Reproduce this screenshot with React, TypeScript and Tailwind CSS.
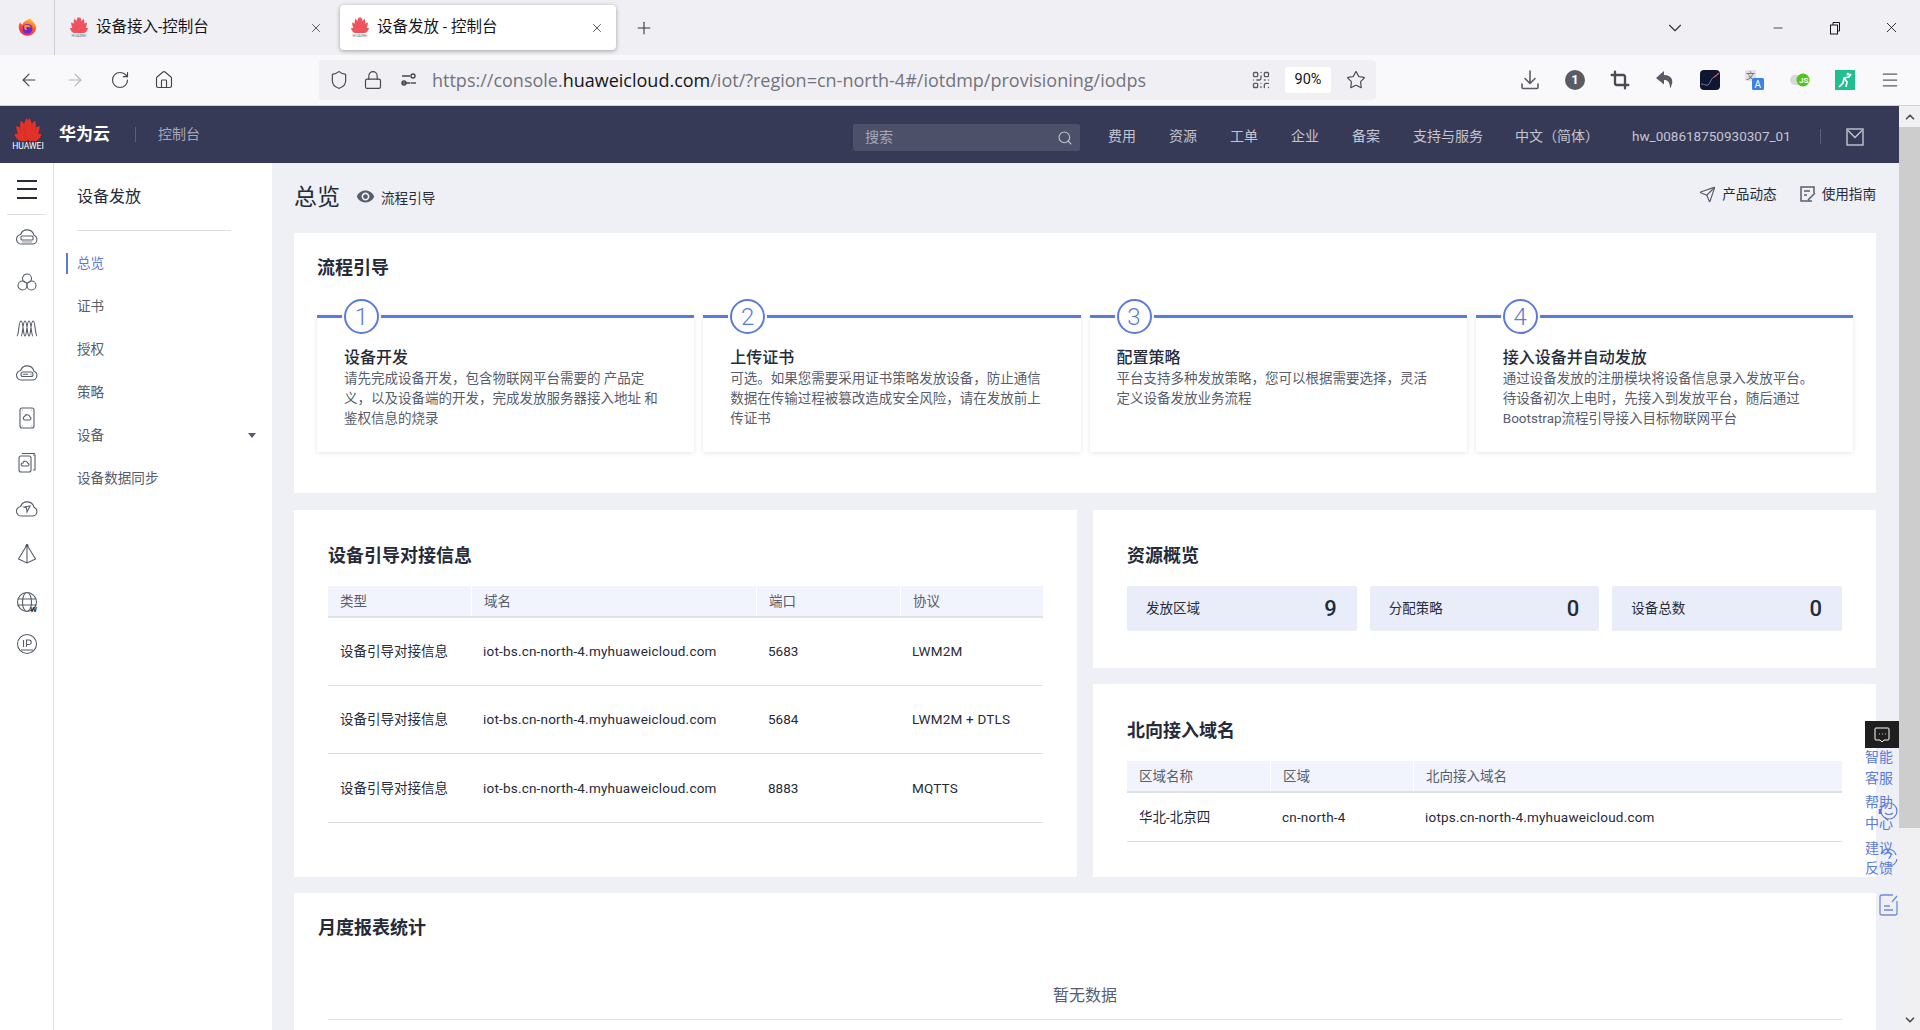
import { ArrowLeft, ArrowRight, ChevronDown, ChevronUp, Crop, Home, Lock, Menu, Minus, Plus, QrCode, RotateCw, Search, Send, Shield, Star, X } from 'lucide-react'
import { MdVisibility } from 'react-icons/md'
import type { ReactNode } from 'react'

const NAV_ITEMS = ['费用', '资源', '工单', '企业', '备案', '支持与服务', '中文（简体）']
const SIDE_ITEMS = ['总览', '证书', '授权', '策略', '设备', '设备数据同步']

const STEPS = [
  { n: '1', title: '设备开发', lines: ['请先完成设备开发，包含物联网平台需要的 产品定', '义，以及设备端的开发，完成发放服务器接入地址 和', '鉴权信息的烧录'] },
  { n: '2', title: '上传证书', lines: ['可选。如果您需要采用证书策略发放设备，防止通信', '数据在传输过程被篡改造成安全风险，请在发放前上', '传证书'] },
  { n: '3', title: '配置策略', lines: ['平台支持多种发放策略，您可以根据需要选择，灵活', '定义设备发放业务流程'] },
  { n: '4', title: '接入设备并自动发放', lines: ['通过设备发放的注册模块将设备信息录入发放平台。', '待设备初次上电时，先接入到发放平台，随后通过', 'Bootstrap流程引导接入目标物联网平台'] },
]

const ENDPOINTS = [
  { port: '5683', protocol: 'LWM2M' },
  { port: '5684', protocol: 'LWM2M + DTLS' },
  { port: '8883', protocol: 'MQTTS' },
]

const STATS = [
  { label: '发放区域', value: 9 },
  { label: '分配策略', value: 0 },
  { label: '设备总数', value: 0 },
]

// fan of 8 petals, both logos use it
function HuaweiPetals({ className, fill }: { className?: string; fill: string }) {
  const petals = [
    { a: -78, l: 0.84 }, { a: 78, l: 0.84 }, { a: -54, l: 0.94 }, { a: 54, l: 0.94 },
    { a: -32, l: 0.98 }, { a: 32, l: 0.98 }, { a: -11, l: 1 }, { a: 11, l: 1 },
  ]
  return (
    <svg viewBox="-15 -17 30 17.500" preserveAspectRatio="none" className={className}>
      {petals.map((p) => (
        <path
          key={p.a}
          d="M0 0C-4.600-4.500-5.200-11-2-17C3.400-13 4.200-5 0 0Z"
          fill={fill}
          stroke="#00000022"
          strokeWidth="0.25"
          transform={`rotate(${p.a}) scale(${p.a < 0 ? -p.l : p.l} ${p.l})`}
        />
      ))}
    </svg>
  )
}

function Favicon() {
  return (
    <span className="flex w-[20px] shrink-0 flex-col items-center">
      <HuaweiPetals className="h-[16px] w-[20px]" fill="#f0555f" />
      <span className="text-[4px] leading-[5px] text-gray-500">HUAWEI</span>
    </span>
  )
}

function FirefoxLogo() {
  return (
    <svg viewBox="0 0 24 24" className="h-[21px] w-[21px]">
      <defs>
        <linearGradient id="fx" x1="0.7" y1="0" x2="0.3" y2="1">
          <stop offset="0" stopColor="#ffd13a" />
          <stop offset="0.5" stopColor="#ff5a2c" />
          <stop offset="1" stopColor="#e5207a" />
        </linearGradient>
      </defs>
      <path d="M15 1c1 3 6 5 7 11a10 10 0 1 1-20-1c0-2 1-4 2-5 0 2 1 2 2 3 1-4 5-5 9-8Z" fill="url(#fx)" />
      <circle cx="12" cy="13.500" r="5.600" fill="#6b2bc9" />
      <path d="M8 10c3-2 7-1 8 2-2-1-5-1-6 1 2 0 2 2 0 2-1 0-2-2-2-5Z" fill="#ff8a3c" />
    </svg>
  )
}

function TabItem({ title, active }: { title: string; active?: boolean }) {
  return (
    <div className={`flex h-[45px] w-[276px] items-center rounded-[4px] pl-[10px] pr-[12px] ${active ? 'bg-white shadow-[0_1px_4px_rgba(0,0,0,0.35)]' : ''}`}>
      <Favicon />
      <span className="ml-[7px] flex-1 whitespace-nowrap text-[15.5px] text-[#15141a]">{title}</span>
      <X className="h-[14px] w-[14px] text-[#33333a]" strokeWidth={1.4} />
    </div>
  )
}

function BrowserChrome() {
  return (
    <div className="shrink-0">
      <div className="flex h-[55px] items-center bg-[#f0f0f4]">
        <div className="flex h-full w-[55px] shrink-0 items-center justify-center border-r border-[#cfcfd8]">
          <FirefoxLogo />
        </div>
        <div className="ml-[4px] w-[281px]"><TabItem title="设备接入-控制台" /></div>
        <TabItem title="设备发放 - 控制台" active />
        <Plus className="ml-[18px] h-[20px] w-[20px] text-[#33333a]" strokeWidth={1.3} />
        <div className="flex-1" />
        <ChevronDown className="mr-[85px] h-[22px] w-[22px] text-[#33333a]" strokeWidth={1.2} />
        <Minus className="mr-[43px] h-[14px] w-[14px] text-[#15141a]" strokeWidth={1.3} />
        <svg viewBox="0 0 14 14" className="mr-[41px] h-[14px] w-[14px]" fill="none" stroke="#15141a">
          <rect x="2.500" y="4" width="7" height="9" />
          <path d="M5 4V1.500h6.500V10H9.500" />
        </svg>
        <X className="mr-[20px] h-[17px] w-[17px] text-[#15141a]" strokeWidth={1.2} />
      </div>
      <div className="flex h-[51px] items-center border-b border-[#cfcfd8] bg-[#f9f9fb]">
        <ArrowLeft className="ml-[19px] h-[20px] w-[20px] text-[#45454d]" strokeWidth={1.4} />
        <ArrowRight className="ml-[26px] h-[20px] w-[20px] text-[#b4b4ba]" strokeWidth={1.4} />
        <RotateCw className="ml-[25px] h-[20px] w-[20px] text-[#45454d]" strokeWidth={1.4} />
        <Home className="ml-[24px] h-[20px] w-[20px] text-[#45454d]" strokeWidth={1.4} />
        <div className="ml-[145px] flex h-[40px] w-[1057px] items-center rounded-[4px] bg-[#f0f0f4]">
          <Shield className="ml-[10px] h-[20px] w-[20px] text-[#45454d]" strokeWidth={1.4} />
          <Lock className="ml-[14px] h-[20px] w-[20px] text-[#45454d]" strokeWidth={1.4} />
          <svg viewBox="0 0 20 20" className="ml-[16px] h-[20px] w-[20px]" fill="none" stroke="#45454d" strokeWidth="1.4">
            <circle cx="14" cy="6" r="2" />
            <path d="M3 6h8M3 13h8.500" />
            <circle cx="5" cy="13" r="2" />
            <path d="M12 13h5" />
          </svg>
          <span className="ml-[13px] w-[720px] whitespace-nowrap text-[18px] text-[#73737c] [font-family:'Open_Sans',sans-serif]">
            https://console.<span className="text-[#15141a]">huaweicloud.com</span>/iot/?region=cn-north-4#/iotdmp/provisioning/iodps
          </span>
          <QrCode className="ml-[99px] h-[20px] w-[20px] text-[#5b5b66]" strokeWidth={1.6} />
          <span className="ml-[14px] flex h-[26px] w-[46px] items-center justify-center rounded-[3px] bg-white text-[14.5px] text-[#15141a]">90%</span>
          <Star className="ml-[15px] h-[20px] w-[20px] text-[#45454d]" strokeWidth={1.4} />
        </div>
        <div className="flex-1" />
        <svg viewBox="0 0 20 20" className="mr-[25px] h-[20px] w-[20px]" fill="none" stroke="#5b5b66" strokeWidth="1.6" strokeLinecap="round" strokeLinejoin="round">
          <path d="M10 1v12M5 8.500l5 5 5-5M2 14v3.500a1 1 0 0 0 1 1h14a1 1 0 0 0 1-1V14" />
        </svg>
        <span className="mr-[25px] flex h-[20px] w-[20px] items-center justify-center rounded-full bg-[#5b5b66] text-[13px] font-bold text-white">1</span>
        <Crop className="mr-[25px] h-[20px] w-[20px] text-[#4a4a55]" strokeWidth={2.8} />
        <svg viewBox="0 0 20 20" className="mr-[25px] h-[20px] w-[20px]" fill="#5b5b66">
          <path d="M9 1 1 8l8 6.500V10c4 0 6 2.500 6 8.500 4.500-7 2.500-13.500-6-13.500V1Z" />
        </svg>
        <svg viewBox="0 0 20 20" className="mr-[25px] h-[20px] w-[20px]">
          <rect width="20" height="20" rx="4" fill="#0f1630" />
          <path d="M1 14c4 0 5 2 7 1s3-7 6-8 3-2 5-4" fill="none" stroke="#6d7fa8" strokeWidth="1" />
          <path d="M14 7c2-1 3-2 5-4" fill="none" stroke="#e5475a" strokeWidth="1.200" />
        </svg>
        <svg viewBox="0 0 20 20" className="mr-[25px] h-[20px] w-[20px]">
          <rect x="0" y="0" width="11" height="11" rx="1" fill="#e2e2e6" />
          <text x="1" y="9" fontSize="9" fill="#666">文</text>
          <rect x="7" y="8" width="12" height="12" rx="1.500" fill="#3b82e8" />
          <text x="9.500" y="18" fontSize="10" fill="#fff">A</text>
        </svg>
        <svg viewBox="0 0 20 20" className="mr-[25px] h-[20px] w-[20px]">
          <rect x="0" y="5" width="14" height="10" rx="5" fill="#d8d8dc" />
          <circle cx="13" cy="10" r="6.500" fill="#52c41a" />
          <text x="9" y="13" fontSize="8" fontWeight="700" fill="#fff">JS</text>
        </svg>
        <svg viewBox="0 0 20 20" className="mr-[25px] h-[20px] w-[20px]">
          <rect width="20" height="20" fill="#1fbf8f" />
          <circle cx="13" cy="4" r="1.500" fill="#fff" />
          <path d="M4 17l4-4 1-5 5-1M9 8l3 4-1 5M14 7l2-3" fill="none" stroke="#fff" strokeWidth="1.7" />
        </svg>
        <Menu className="mr-[20px] h-[20px] w-[20px] text-[#5b5b66]" strokeWidth={1.5} />
      </div>
    </div>
  )
}

function TopBar() {
  return (
    <div className="flex h-[57px] shrink-0 items-center bg-[#363a56] text-[#c3c5d2]">
      <div className="ml-[12px] flex w-[32px] flex-col items-center">
        <HuaweiPetals className="h-[23px] w-[30px]" fill="#e2332a" />
        <span className="text-[8.5px] leading-[11px] text-white">HUAWEI</span>
      </div>
      <span className="ml-[15px] text-[17px] font-bold text-white">华为云</span>
      <span className="ml-[25px] h-[15px] w-px bg-[#5a5e78]" />
      <span className="ml-[22px] text-[14px] text-[#a5a8ba]">控制台</span>
      <div className="ml-[653px] mt-[6px] flex h-[27px] w-[227px] items-center rounded-[2px] bg-[#4d5069] pl-[12px] pr-[7px] text-[14px] text-[#a5a8ba]">
        <span className="flex-1">搜索</span>
        <Search className="h-[16px] w-[16px] text-[#c3c5d2]" strokeWidth={1.6} />
      </div>
      <div className="ml-[28px] mt-[4px] flex items-center">
        {NAV_ITEMS.map((item, i) => (
          <span key={item} className={`whitespace-nowrap text-[14px] ${i === 5 ? 'mr-[32px]' : 'mr-[33px]'}`}>{item}</span>
        ))}
      </div>
      <span className="mt-[4px] text-[13.5px]">hw_008618750930307_01</span>
      <span className="ml-[29px] mt-[4px] h-[15px] w-px bg-[#5a5e78]" />
      <svg viewBox="0 0 20 20" className="ml-[24px] mt-[4px] h-[20px] w-[20px]" fill="none" stroke="#c3c5d2" strokeWidth="1.4">
        <rect x="2" y="2" width="16" height="16" />
        <path d="M3 3.500l7 7 7-7" />
      </svg>
    </div>
  )
}

function RailIcon({ children, className = '' }: { children: ReactNode; className?: string }) {
  return (
    <div className={`flex h-[45px] items-center justify-center ${className}`}>
      <svg viewBox="0 0 24 24" className="h-[24px] w-[24px]" fill="none" stroke="#575d6c" strokeWidth="1.1">
        {children}
      </svg>
    </div>
  )
}

const CLOUD = 'M7 19h10.500a4.500 4.500 0 0 0 1.500-8.700A7 7 0 0 0 5.600 9.500 4.800 4.800 0 0 0 7 19Z'

function Rail() {
  return (
    <div className="flex w-[54px] shrink-0 flex-col border-r border-[#dfe1e6] bg-white">
      <div className="mx-[7px] flex h-[52px] items-center justify-center border-b border-[#dfe1e6] pt-[1px]">
        <div className="flex h-[19px] w-[20px] flex-col justify-between">
          <span className="h-[2px] bg-[#252b3a]" />
          <span className="h-[2px] bg-[#252b3a]" />
          <span className="h-[2px] bg-[#252b3a]" />
        </div>
      </div>
      <RailIcon className="mt-[-1px]"><path d={CLOUD} /><rect x="6" y="11" width="12" height="4" rx="1" /><path d="M7 17h10" strokeWidth="2" stroke="#c4c6cc" /></RailIcon>
      <RailIcon><circle cx="12" cy="8.500" r="4.500" /><circle cx="7.500" cy="15.500" r="4.500" /><circle cx="16.500" cy="15.500" r="4.500" /></RailIcon>
      <RailIcon className="mt-[1px]"><path d="M2 20c2-1 1.500-15 4-15s2 15 4 15M6 20c2 0 1.500-15 4-15s2 15 4 15M10 20c2 0 1.500-15 4-15s2 15 4 15M14 20c2 0 1.500-15 4-15s2 14 4 15" /></RailIcon>
      <RailIcon><path d={CLOUD} /><rect x="6" y="11" width="12" height="4.500" rx="2" /><path d="M8 13.200h5M15.500 13.200h1" /></RailIcon>
      <RailIcon><rect x="5" y="2" width="14" height="20" rx="2" /><path d="M9.500 14h5a1.600 1.600 0 0 0 .4-3.100 2.800 2.800 0 0 0-5.400-.3A1.800 1.800 0 0 0 9.500 14Z" /><path d="M7 4h.5M16.500 4h.5M7 20h.5M16.500 20h.5" /></RailIcon>
      <RailIcon><rect x="4" y="5" width="12" height="16" rx="2" /><path d="M7.500 15h5a1.400 1.400 0 0 0 .2-2.800 2.400 2.400 0 0 0-4.700-.2 1.500 1.500 0 0 0-.5 3Z" /><path d="M18 4h2v15h-2" /><path d="M7 2.500h13" /></RailIcon>
      <RailIcon className="mt-[1px]"><path d={CLOUD} /><path d="M9 10l6-1-3 6-.5-4Z" /></RailIcon>
      <RailIcon><path d="M12 3 3.500 17l8.500 4 8.500-4ZM12 3v18" /><circle cx="12" cy="3.500" r="1" fill="#252b3a" /></RailIcon>
      <RailIcon className="mt-[3px]"><circle cx="12" cy="12" r="9.500" /><ellipse cx="12" cy="12" rx="4.500" ry="9.500" /><path d="M2.500 9h19M2.500 15h19" /><text x="15" y="22" fontSize="8" fontWeight="700" fill="#252b3a" stroke="none">W</text></RailIcon>
      <RailIcon className="mt-[-3px]"><circle cx="12" cy="12" r="9.500" /><path d="M8.500 8v7M11.500 15V8h2.500a2 2 0 0 1 0 4.500h-2.500M6 18h12" /></RailIcon>
    </div>
  )
}

function Sidebar() {
  return (
    <div className="w-[218px] shrink-0 bg-white pl-[23px]">
      <div className="flex h-[68px] w-[154px] items-center border-b border-[#dfe1e6] pt-[1px] text-[16px] text-[#252b3a]">设备发放</div>
      <div className="mt-[11px]">
        {SIDE_ITEMS.map((item, i) => (
          <div key={item} className={`relative flex h-[43px] w-[183px] items-center text-[13.6px] ${i === 0 ? 'text-[#5b7bdb]' : 'text-[#575d6c]'}`}>
            {i === 0 && <span className="absolute left-[-11px] top-[11px] h-[21px] w-[2px] bg-[#5b7bdb]" />}
            {item}
            {item === '设备' && <span className="absolute right-[4px] top-[19px] h-0 w-0 border-x-[4px] border-t-[5px] border-x-transparent border-t-[#575d6c]" />}
          </div>
        ))}
      </div>
    </div>
  )
}

function CardTitle({ children, className = '' }: { children: ReactNode; className?: string }) {
  return <h2 className={`text-[18px] font-bold leading-[26px] text-[#252b3a] ${className}`}>{children}</h2>
}

function StepCard({ step }: { step: (typeof STEPS)[number] }) {
  return (
    <div className="relative h-[137px] border-t-[3px] border-[#5b7bdb] bg-white pl-[27px] pt-[29px] shadow-[0_1px_5px_rgba(0,0,0,0.1)]">
      <span className="absolute left-[27px] top-[-19px] flex h-[35px] w-[35px] items-center justify-center rounded-full border-2 border-[#5b7bdb] bg-white text-[24px] font-light text-[#5b7bdb] shadow-[0_0_0_2px_white]">
        {step.n}
      </span>
      <h3 className="text-[16px] font-medium leading-[21px] text-[#252b3a]">{step.title}</h3>
      {step.lines.map((line) => (
        <p key={line} className="whitespace-nowrap text-[13.5px] leading-[20px] text-[#575d6c]">{line}</p>
      ))}
    </div>
  )
}

function TableHeader({ cols, labels }: { cols: string; labels: string[] }) {
  return (
    <div className={`grid h-[32px] border-b-2 border-[#dfe1e6] bg-[#f1f4fc] text-[13.5px] text-[#575d6c] ${cols}`}>
      {labels.map((label, i) => (
        <div key={label} className={`flex items-center pl-[12px] ${i > 0 ? 'border-l border-white' : ''}`}>{label}</div>
      ))}
    </div>
  )
}

function Content() {
  return (
    <div className="min-w-0 flex-1 overflow-hidden bg-[#eef0f5] pl-[22px] pr-[23px]">
      <div className="flex h-[70px] items-center">
        <span className="text-[23px] text-[#252b3a]">总览</span>
        <MdVisibility className="mb-[3px] ml-[16px] h-[19px] w-[19px] text-[#575d6c]" />
        <span className="ml-[6px] text-[13.6px] text-[#252b3a]">流程引导</span>
        <div className="flex-1" />
        <Send className="mb-[8px] h-[17px] w-[17px] text-[#575d6c]" strokeWidth={1.7} />
        <span className="mb-[8px] ml-[6px] text-[13.6px] text-[#252b3a]">产品动态</span>
        <svg viewBox="0 0 18 18" className="mb-[8px] ml-[22px] h-[18px] w-[18px]" fill="none" stroke="#575d6c" strokeWidth="1.500">
          <path d="M13 16H2V2h13v6M5 6h6M5 10h3M9 15l7-7" />
        </svg>
        <span className="mb-[8px] ml-[5px] text-[13.6px] text-[#252b3a]">使用指南</span>
      </div>

      <section className="h-[260px] bg-white pl-[23px] pr-[23px] pt-[22px]">
        <CardTitle>流程引导</CardTitle>
        <div className="mt-[34px] grid grid-cols-4 gap-[9px]">
          {STEPS.map((step) => <StepCard key={step.n} step={step} />)}
        </div>
      </section>

      <div className="mt-[17px] grid h-[367px] grid-cols-2 gap-[16px]">
        <section className="bg-white px-[34px] pt-[33px]">
          <CardTitle>设备引导对接信息</CardTitle>
          <div className="mt-[17px]">
            <TableHeader cols="grid-cols-[143px_285px_144px_1fr]" labels={['类型', '域名', '端口', '协议']} />
            {ENDPOINTS.map((row, i) => (
              <div key={row.port} className={`grid grid-cols-[143px_285px_144px_1fr] items-center border-b border-[#dfe1e6] text-[13.5px] text-[#252b3a] ${i === 2 ? 'h-[69px]' : 'h-[68px]'}`}>
                <span className="pl-[12px]">设备引导对接信息</span>
                <span className="pl-[12px] tracking-[0.2px]">iot-bs.cn-north-4.myhuaweicloud.com</span>
                <span className="pl-[12px]">{row.port}</span>
                <span className="pl-[12px] tracking-[0.2px]">{row.protocol}</span>
              </div>
            ))}
          </div>
        </section>
        <div className="flex flex-col gap-[16px]">
          <section className="h-[158px] bg-white px-[34px] pt-[33px]">
            <CardTitle>资源概览</CardTitle>
            <div className="mt-[17px] grid grid-cols-3 gap-[13px]">
              {STATS.map((s) => (
                <div key={s.label} className="flex h-[45px] items-center justify-between rounded-[2px] bg-[#e9edf9] pl-[19px] pr-[20px]">
                  <span className="text-[13.5px] text-[#252b3a]">{s.label}</span>
                  <span className="text-[22px] font-medium text-[#252b3a]">{s.value}</span>
                </div>
              ))}
            </div>
          </section>
          <section className="flex-1 bg-white px-[34px] pt-[34px]">
            <CardTitle>北向接入域名</CardTitle>
            <div className="mt-[17px]">
              <TableHeader cols="grid-cols-[143px_143px_1fr]" labels={['区域名称', '区域', '北向接入域名']} />
              <div className="grid h-[49px] grid-cols-[143px_143px_1fr] items-center border-b border-[#dfe1e6] text-[13.5px] text-[#252b3a]">
                <span className="pl-[12px]">华北-北京四</span>
                <span className="pl-[12px] tracking-[0.2px]">cn-north-4</span>
                <span className="pl-[12px] tracking-[0.2px]">iotps.cn-north-4.myhuaweicloud.com</span>
              </div>
            </div>
          </section>
        </div>
      </div>

      <section className="mt-[16px] h-[200px] bg-white pt-[22px]">
        <CardTitle className="ml-[24px]">月度报表统计</CardTitle>
        <div className="mx-[34px] mt-[31px] flex h-[48px] items-center justify-center border-b border-[#dfe1e6] text-[16px] text-[#575d6c]">暂无数据</div>
      </section>
    </div>
  )
}

function HelpWidget() {
  return (
    <div className="absolute right-[21px] top-[615px] w-[34px] text-[14px] leading-[21px] text-[#5b7bdb]">
      <div className="flex h-[27px] items-center justify-center bg-[#1f1f1f]">
        <svg viewBox="0 0 18 18" className="h-[18px] w-[18px]" fill="none" stroke="#fff" strokeWidth="1">
          <path d="M3 2h12a1 1 0 0 1 1 1v10a1 1 0 0 1-1 1h-4l-2 2-2-2H3a1 1 0 0 1-1-1V3a1 1 0 0 1 1-1Z" />
          <path d="M6 8h.5M9 8h.5M12 8h.5" strokeWidth="1.500" />
        </svg>
      </div>
      <div className="mt-[-1px]">智能</div>
      <div>客服</div>
      <div className="relative mt-[3px]">
        帮助
        <svg viewBox="0 0 22 22" className="absolute left-[12px] top-[8px] h-[22px] w-[22px]" fill="none" stroke="#5b7bdb" strokeWidth="1.200">
          <circle cx="12" cy="11" r="8" />
          <path d="M8 13c2 2 6 2 8 0" />
          <path d="M3 9v5" strokeWidth="2.500" />
        </svg>
      </div>
      <div>中心</div>
      <div className="relative mt-[4px]">
        建议
        <svg viewBox="0 0 22 22" className="absolute left-[12px] top-[8px] h-[22px] w-[22px]" fill="none" stroke="#5b7bdb" strokeWidth="1.200">
          <path d="M4 8a8 8 0 0 1 15 1M20 13a8 8 0 0 1-9 7" />
          <path d="M9 8c1-2 5-2 5 1 0 2-2 2-2 4M12 16v1" />
        </svg>
      </div>
      <div className="mt-[-1px]">反馈</div>
      <svg viewBox="0 0 20 22" className="ml-[14px] mt-[15px] h-[22px] w-[20px]" fill="none" stroke="#6f8be0" strokeWidth="1.300">
        <path d="M14 1H3a2 2 0 0 0-2 2v16a2 2 0 0 0 2 2h13a2 2 0 0 0 2-2V7M13 8l5-6M5 12h6M5 16h9" />
      </svg>
    </div>
  )
}

function Scrollbar() {
  return (
    <div className="flex w-[21px] shrink-0 flex-col bg-[#f0f0f3]">
      <div className="flex h-[21px] items-center justify-center">
        <ChevronUp className="h-[14px] w-[14px] text-[#505050]" strokeWidth={3} />
      </div>
      <div className="h-[701px] bg-[#cdcdcd]" />
      <div className="flex-1" />
      <div className="flex h-[21px] items-center justify-center">
        <ChevronDown className="h-[14px] w-[14px] text-[#505050]" strokeWidth={3} />
      </div>
    </div>
  )
}

export default function App() {
  return (
    <div className="flex h-[1030px] w-[1920px] flex-col overflow-hidden bg-white [font-family:Roboto,'Noto_Sans_CJK_SC',sans-serif]">
      <BrowserChrome />
      <div className="relative flex min-h-0 flex-1">
        <div className="flex min-w-0 flex-1 flex-col">
          <TopBar />
          <div className="flex min-h-0 flex-1">
            <Rail />
            <Sidebar />
            <Content />
          </div>
        </div>
        <Scrollbar />
        <HelpWidget />
      </div>
    </div>
  )
}
